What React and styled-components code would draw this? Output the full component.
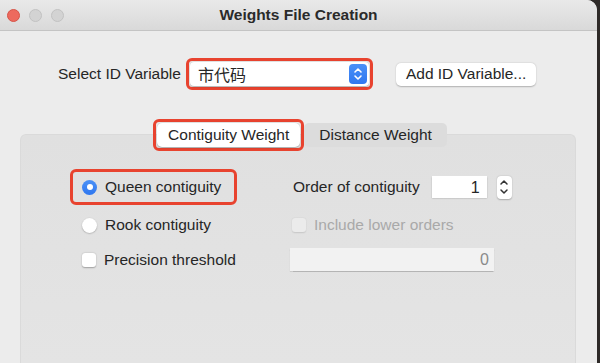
import styled, { createGlobalStyle } from 'styled-components';

const GlobalStyle = createGlobalStyle`
  html, body {
    margin: 0;
    padding: 0;
    background: #2e2a28;
  }
  body {
    font-family: "Liberation Sans", "Noto Sans CJK SC", sans-serif;
    color: #262626;
  }
`;

export default function App() {
  return (
    <>
      <GlobalStyle />
      <Window>
        <TitleBar>
          <Lights>
            <Light color="#ed6a5e" border="#d65448" />
            <Light color="#d3d3d3" border="#c2c2c2" />
            <Light color="#d3d3d3" border="#c2c2c2" />
          </Lights>
          <Title>Weights File Creation</Title>
        </TitleBar>

        <Body>
          <IdRow>
            <Label>Select ID Variable</Label>
            <Highlight>
              <Select>
                <SelectText>市代码</SelectText>
                <BlueStepper>
                  <svg width="10" height="14" viewBox="0 0 10 14" fill="none" stroke="#fff" strokeWidth="1.6" strokeLinecap="round" strokeLinejoin="round">
                    <path d="M2 5 L5 2 L8 5" />
                    <path d="M2 9 L5 12 L8 9" />
                  </svg>
                </BlueStepper>
              </Select>
            </Highlight>
            <Button>Add ID Variable...</Button>
          </IdRow>

          <Tabs>
            <Highlight>
              <Tab active>Contiguity Weight</Tab>
            </Highlight>
            <Tab>Distance Weight</Tab>
          </Tabs>

          <Panel>
            <Grid>
              <Highlight>
                <Option>
                  <Radio checked />
                  <OptionText>Queen contiguity</OptionText>
                </Option>
              </Highlight>
              <RightCell>
                <OptionText>Order of contiguity</OptionText>
                <NumberInput>1</NumberInput>
                <Stepper>
                  <svg width="10" height="18" viewBox="0 0 10 18" fill="none" stroke="#333" strokeWidth="1.5" strokeLinecap="round" strokeLinejoin="round">
                    <path d="M2 6 L5 3 L8 6" />
                    <path d="M2 12 L5 15 L8 12" />
                  </svg>
                </Stepper>
              </RightCell>

              <PlainOption>
                <Radio />
                <OptionText>Rook contiguity</OptionText>
              </PlainOption>
              <RightCell>
                <Checkbox disabled />
                <OptionText disabled>Include lower orders</OptionText>
              </RightCell>

              <PlainOption>
                <Checkbox />
                <OptionText>Precision threshold</OptionText>
              </PlainOption>
              <RightCell>
                <ThresholdInput>0</ThresholdInput>
              </RightCell>
            </Grid>
          </Panel>
        </Body>
      </Window>
    </>
  );
}

const Window = styled.div`
  width: 597px;
  height: 363px;
  background: #ececec;
  border-top-right-radius: 10px;
  overflow: hidden;
  display: flex;
  flex-direction: column;
`;

const TitleBar = styled.div`
  height: 30px;
  flex-shrink: 0;
  display: flex;
  align-items: center;
  position: relative;
  background: linear-gradient(#e9e9e9, #d9d9d9);
  border-bottom: 1px solid #c4c4c4;
`;

const Lights = styled.div`
  display: flex;
  gap: 9px;
  padding-left: 7px;
`;

const Light = styled.span`
  width: 13px;
  height: 13px;
  box-sizing: border-box;
  border-radius: 50%;
  background: ${p => p.color};
  border: 0.5px solid ${p => p.border};
`;

const Title = styled.div`
  position: absolute;
  left: 0;
  right: 0;
  text-align: center;
  font-weight: bold;
  font-size: 15.5px;
  color: #2a2a2a;
  pointer-events: none;
`;

const Body = styled.div`
  flex: 1;
  display: flex;
  flex-direction: column;
  padding: 27px 21px 0 20px;
`;

const IdRow = styled.div`
  display: flex;
  align-items: center;
  padding-left: 38px;
`;

const Label = styled.span`
  font-size: 15.5px;
  margin-right: 5px;
`;

const Highlight = styled.div`
  border: 3px solid #e8432f;
  border-radius: 6px;
  padding: 1px;
  display: flex;
`;

const Select = styled.div`
  width: 179px;
  height: 24px;
  background: #fff;
  border-radius: 4px;
  box-shadow: 0 0.5px 1.5px rgba(0, 0, 0, 0.25);
  display: flex;
  align-items: center;
  justify-content: space-between;
  padding: 0 2px 0 8px;
  box-sizing: border-box;
`;

const SelectText = styled.span`
  font-size: 16px;
`;

const BlueStepper = styled.span`
  width: 18px;
  height: 20px;
  border-radius: 4px;
  background: linear-gradient(#4a90f7, #2f78f0);
  display: flex;
  align-items: center;
  justify-content: center;
`;

const Button = styled.button`
  margin-left: 23px;
  height: 23px;
  padding: 0 10px;
  background: #fff;
  border: none;
  border-radius: 5px;
  box-shadow: 0 0.5px 1.5px rgba(0, 0, 0, 0.25);
  font-family: inherit;
  font-size: 15.5px;
  color: #262626;
`;

const Tabs = styled.div`
  display: flex;
  align-items: center;
  justify-content: center;
  gap: 0;
  margin: 29px 0 -17px 4px;
  position: relative;
  z-index: 1;
`;

const Tab = styled.div`
  height: 24px;
  padding: 0 ${p => (p.active ? '11px' : '15px')};
  display: flex;
  align-items: center;
  font-size: 15.5px;
  border-radius: 5px;
  background: ${p => (p.active ? '#fff' : '#dcdcdc')};
  box-shadow: ${p => (p.active ? '0 0.5px 1.5px rgba(0,0,0,0.25)' : 'none')};
`;

const Panel = styled.div`
  flex: 1;
  background: linear-gradient(#e0e0e0, #e4e4e4);
  border: 1px solid #dadada;
  border-bottom: none;
  border-radius: 6px 6px 0 0;
  padding: 33px 0 0 49px;
`;

const Grid = styled.div`
  display: grid;
  grid-template-columns: 220px 1fr;
  grid-template-rows: 38px 38px 31px;
  align-items: center;
  justify-items: start;
`;

const Option = styled.div`
  display: flex;
  align-items: center;
  gap: 8px;
  height: 28px;
  padding: 0 12px 0 8px;
`;

const PlainOption = styled.div`
  display: flex;
  align-items: center;
  gap: 8px;
  padding-left: 12px;
`;

const OptionText = styled.span`
  font-size: 15.5px;
  color: ${p => (p.disabled ? '#a9a9a9' : '#262626')};
`;

const Radio = styled.span`
  width: 15px;
  height: 15px;
  border-radius: 50%;
  box-sizing: border-box;
  display: flex;
  align-items: center;
  justify-content: center;
  background: ${p => (p.checked ? 'linear-gradient(#4b91f7, #2f77ef)' : '#fff')};
  box-shadow: ${p => (p.checked ? 'none' : '0 0.5px 1.5px rgba(0,0,0,0.3)')};
  &::after {
    content: '';
    display: ${p => (p.checked ? 'block' : 'none')};
    width: 6px;
    height: 6px;
    border-radius: 50%;
    background: #fff;
  }
`;

const Checkbox = styled.span`
  width: 14px;
  height: 14px;
  border-radius: 3px;
  background: ${p => (p.disabled ? '#ebebeb' : '#fff')};
  box-shadow: 0 0.5px 1.5px rgba(0, 0, 0, ${p => (p.disabled ? 0.12 : 0.3)});
  margin-left: ${p => (p.disabled ? '-1px' : '0')};
`;

const RightCell = styled.div`
  display: flex;
  align-items: center;
  gap: 8px;
  margin-left: 3px;
`;

const NumberInput = styled.div`
  width: 55px;
  height: 22px;
  box-sizing: border-box;
  background: #fff;
  box-shadow: 0 0.5px 1.5px rgba(0, 0, 0, 0.25);
  font-size: 16px;
  text-align: right;
  padding: 3px 7px 0 0;
  margin-left: 4px;
`;

const Stepper = styled.span`
  width: 15px;
  height: 23px;
  border-radius: 4px;
  background: #fff;
  box-shadow: 0 0.5px 1.5px rgba(0, 0, 0, 0.25);
  display: flex;
  align-items: center;
  justify-content: center;
  margin-left: 2px;
`;

const ThresholdInput = styled.div`
  width: 204px;
  height: 23px;
  box-sizing: border-box;
  background: #f2f2f2;
  box-shadow: 0 0.5px 1px rgba(0, 0, 0, 0.2);
  font-size: 16px;
  color: #8a8a8a;
  text-align: right;
  padding: 3px 5px 0 0;
  margin-left: -3px;
`;
